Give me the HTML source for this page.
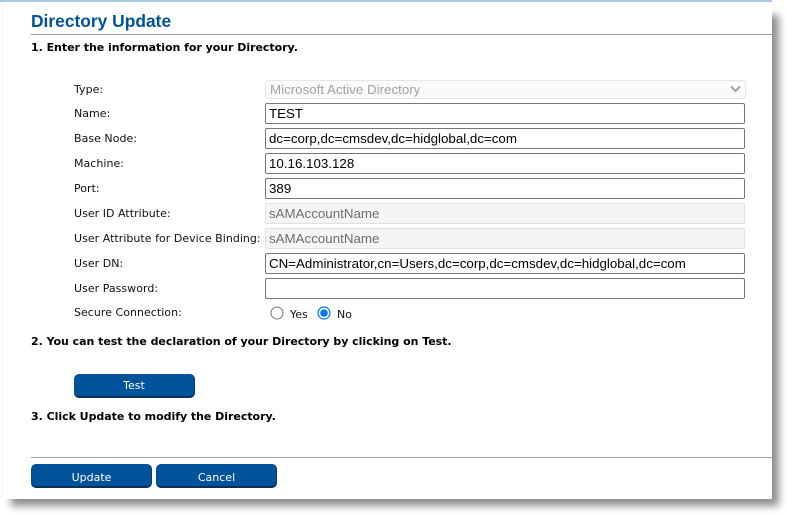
<!DOCTYPE html>
<html>
<head>
<meta charset="utf-8">
<style>
html,body{margin:0;padding:0;background:#fff;}
body{width:788px;height:515px;position:relative;overflow:hidden;font-family:"DejaVu Sans",Verdana,sans-serif;}
div,span{position:absolute;box-sizing:border-box;white-space:nowrap;}
#shadow{left:11px;top:15px;width:768px;height:491px;background:#8f8f8f;filter:blur(4px);}
#edge{left:0;top:0;width:4px;height:499px;background:linear-gradient(to right,#fff,#f0f0f0);}
#panel{left:3px;top:0;width:769px;height:499px;background:#fff;}
#bar{left:0;top:0;width:772px;height:2px;background:#a9c8e8;}
#title{left:31px;top:11px;font-family:"Liberation Sans",sans-serif;font-size:17.4px;line-height:20px;font-weight:bold;color:#00529b;}
.hr{left:31px;width:741px;height:1px;background:#999;}
.step{left:31px;font-size:11px;line-height:14px;font-weight:bold;color:#000;letter-spacing:-.03px;}
.lb{left:74px;font-size:11px;line-height:14px;color:#111;letter-spacing:.03px;}
.in{left:265px;width:480px;height:21px;border:1px solid #767676;border-radius:2px;background:#fff;font:13.33px/19px "Liberation Sans",sans-serif;color:#000;padding-left:3px;}
.dis{border-color:#e0e0e0;background:#f5f5f5;color:#6d6d6d;}
.btn{height:24px;width:121px;background:#00529b;border-radius:5px;border-bottom:2px solid #0b2f55;border-right:1px solid #0b3a66;color:#fff;font-size:11px;line-height:24px;text-align:center;}
.rt{font-size:11px;line-height:14px;color:#111;}
</style>
</head>
<body>
<div id="shadow"></div>
<div id="edge"></div>
<div id="panel"></div>
<div id="bar"></div>
<div id="title">Directory Update</div>
<div class="hr" style="top:34px"></div>
<div class="step" style="top:41px">1. Enter the information for your Directory.</div>

<div class="lb" style="top:83px">Type:</div>
<div class="in" style="top:80px;height:19px;border-color:#e6e6e6;background:#fafafa;color:#a3a3a3;line-height:17px;padding-left:4px;border-radius:3px;left:265px;width:481px">Microsoft Active Directory
<svg style="position:absolute;right:4px;top:4px" width="11" height="8" viewBox="0 0 11 8"><path d="M1 1.5 L5.5 6 L10 1.5" fill="none" stroke="#a0a0a0" stroke-width="2"/></svg>
</div>
<div class="lb" style="top:107px">Name:</div>
<div class="in" style="top:103px">TEST</div>
<div class="lb" style="top:132px">Base Node:</div>
<div class="in" style="top:128px">dc=corp,dc=cmsdev,dc=hidglobal,dc=com</div>
<div class="lb" style="top:157px">Machine:</div>
<div class="in" style="top:153px">10.16.103.128</div>
<div class="lb" style="top:182px">Port:</div>
<div class="in" style="top:178px">389</div>
<div class="lb" style="top:207px">User ID Attribute:</div>
<div class="in dis" style="top:203px">sAMAccountName</div>
<div class="lb" style="top:232px">User Attribute for Device Binding:</div>
<div class="in dis" style="top:228px">sAMAccountName</div>
<div class="lb" style="top:257px">User DN:</div>
<div class="in" style="top:253px">CN=Administrator,cn=Users,dc=corp,dc=cmsdev,dc=hidglobal,dc=com</div>
<div class="lb" style="top:282px">User Password:</div>
<div class="in" style="top:278px"></div>
<div class="lb" style="top:306px">Secure Connection:</div>

<svg style="position:absolute;left:270px;top:306px" width="14" height="14" viewBox="0 0 14 14"><circle cx="7" cy="7" r="6" fill="#fff" stroke="#767676" stroke-width="1"/></svg>
<span class="rt" style="left:290px;top:308px">Yes</span>
<svg style="position:absolute;left:317px;top:306px" width="14" height="14" viewBox="0 0 14 14"><circle cx="7" cy="7" r="6" fill="#fff" stroke="#0075ff" stroke-width="1.2"/><circle cx="7" cy="7" r="3.8" fill="#0075ff"/></svg>
<span class="rt" style="left:337px;top:308px">No</span>

<div class="step" style="top:335px">2. You can test the declaration of your Directory by clicking on Test.</div>
<div class="btn" style="left:74px;top:374px">Test</div>
<div class="step" style="top:410px">3. Click Update to modify the Directory.</div>
<div class="hr" style="top:457px;background:#a5a5a5"></div>
<div class="btn" style="left:31px;top:464px;line-height:27px;padding-left:1px">Update</div>
<div class="btn" style="left:156px;top:464px;line-height:27px;padding-left:1px">Cancel</div>
</body>
</html>
